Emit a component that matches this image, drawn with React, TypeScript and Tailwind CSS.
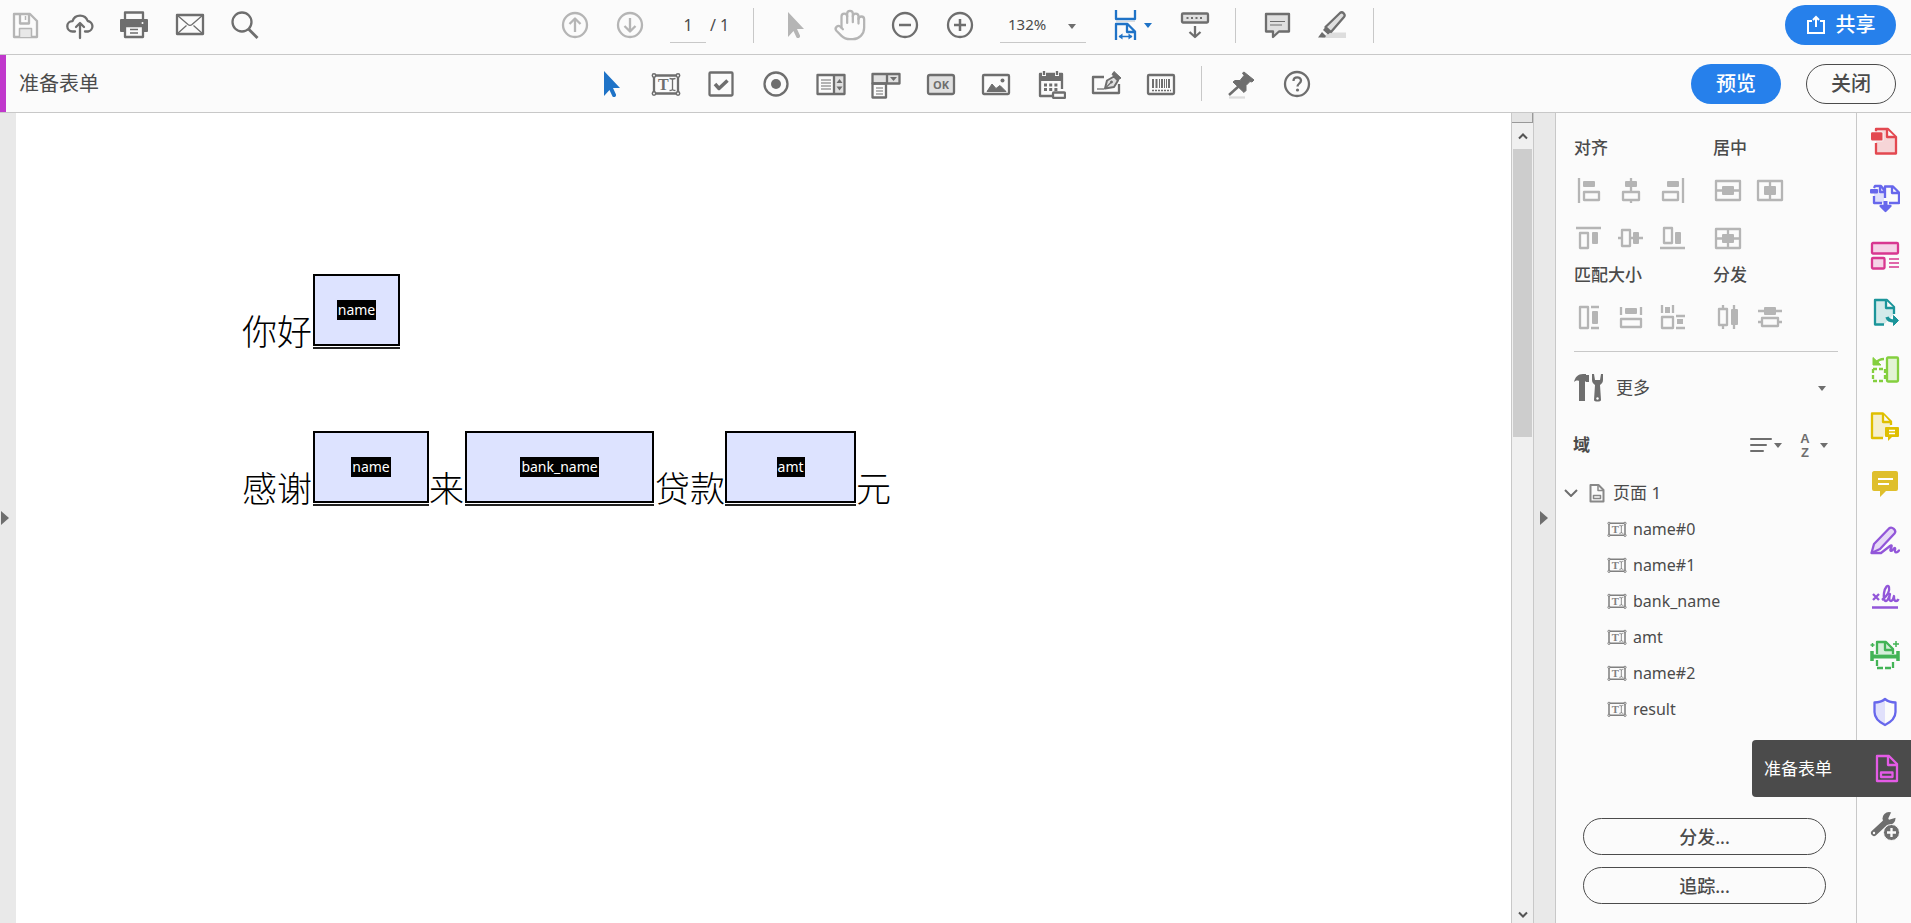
import type { ReactNode } from "react";
import { Hand } from "lucide-react";
import clsx from "clsx";

type IconProps = {
    children: ReactNode;
    className?: string;
    box?: number;
};

function Icon({ children, className, box = 30 }: IconProps) {
    return (
        <svg
            viewBox={`0 0 ${box} ${box}`}
            className={clsx("shrink-0", className ?? "size-[30px]")}
            fill="none"
            stroke="currentColor"
            strokeWidth={2.3}
            strokeLinejoin="round"
            aria-hidden="true"
        >
            {children}
        </svg>
    );
}

function Caret({ className }: { className?: string }) {
    return (
        <svg viewBox="0 0 8 5" className={clsx("w-2 h-[5px] shrink-0", className)} fill="currentColor" aria-hidden="true">
            <path d="M0 0h8L4 5z" />
        </svg>
    );
}

function IconButton({ label, children, className }: { label: string; children: ReactNode; className?: string }) {
    return (
        <button type="button" aria-label={label} className={clsx("flex shrink-0 items-center", className)}>
            {children}
        </button>
    );
}

function Divider() {
    return <div className="h-[35px] w-px shrink-0 bg-[#c8c8c8]" />;
}

const pointer = <path d="M8 2v25l5.500-6 3 6.500c2 1.500 4 0 3.500-2l-3-6.500h7z" fill="currentColor" stroke="none" />;

const textField = (
    <>
        <path d="M4 6.500h22M4 24.500h22M3 8v15M27 8v15" />
        <g strokeWidth="1.500">
            <circle cx="3" cy="6.500" r="1.700" />
            <circle cx="27" cy="6.500" r="1.700" />
            <circle cx="3" cy="24.500" r="1.700" />
            <circle cx="27" cy="24.500" r="1.700" />
            <path d="M21.500 10v11M18.500 9.500c2 0 3 .5 3 1.500 0-1 1-1.500 3-1.500M18.500 21.500c2 0 3-.5 3-1.500 0 1 1 1.500 3 1.500" strokeWidth="1.300" />
        </g>
        <text x="7" y="21" fontFamily="Liberation Serif, serif" fontSize="16" fontWeight="700" fill="currentColor" stroke="none">T</text>
    </>
);

const fileTools = [
    {
        label: "保存",
        dim: true,
        icon: (
            <>
                <path d="M4 4h16l7 7v16H4z" />
                <path d="M10 4v9.500h9V4" />
                <path d="M15.500 6v4" strokeWidth="1.500" />
                <path d="M9.500 27v-8.500h12V27" fill="#e8e8e8" strokeWidth="1.500" />
            </>
        ),
    },
    {
        label: "上传",
        icon: (
            <g strokeLinecap="round">
                <path d="M10 21.500H7.500a5.200 5.200 0 0 1 0-10.400A8 8 0 0 1 22.700 11a5.300 5.300 0 0 1 .3 10.500h-3" />
                <path d="M15 28V13.500M11 17l4-4 4 4" />
            </g>
        ),
    },
    {
        label: "打印",
        icon: (
            <>
                <path d="M5 11V2.500h18V11" />
                <path d="M1 9h26a1 1 0 0 1 1 1v11a1 1 0 0 1-1 1H1a1 1 0 0 1-1-1V10a1 1 0 0 1 1-1z" fill="currentColor" stroke="none" />
                <path d="M5 16h18v11H5z" fill="#fafafa" />
                <path d="M10 19.500h8M10 23h8" strokeWidth="1.300" />
                <circle cx="22.500" cy="13" r="1" fill="#fff" stroke="none" />
            </>
        ),
    },
    {
        label: "电子邮件",
        icon: (
            <>
                <path d="M2 5h26v19H2z" />
                <path d="M2 5l11 9.500c1.500 1.200 2.500 1.200 4 0L28 5M2 24l9.500-8.500M28 24l-9.500-8.500" strokeWidth="1.300" />
            </>
        ),
    },
    {
        label: "查找",
        icon: (
            <>
                <circle cx="12" cy="12" r="9.500" />
                <path d="M18.500 19l9 9" strokeWidth="2.800" />
            </>
        ),
    },
];

const formTools = [
    { label: "文本域", icon: textField },
    {
        label: "复选框",
        icon: (
            <>
                <rect x="3.500" y="3.500" width="23" height="23" rx="1" />
                <path d="M9 15l4 4.500 8.500-8" strokeWidth="3.500" />
            </>
        ),
    },
    {
        label: "单选钮",
        icon: (
            <>
                <circle cx="15" cy="15" r="11.500" />
                <circle cx="15" cy="15" r="5" fill="currentColor" stroke="none" />
            </>
        ),
    },
    {
        label: "列表框",
        icon: (
            <>
                <path d="M18 6h10v19H18z" fill="#e0e0e0" stroke="none" />
                <path d="M1.500 6h27v19h-27zM18 6v19" />
                <path d="M5 11h10M5 14h10M5 17h10M5 20h10" strokeWidth="1.200" />
                <path d="M20.500 14l3-4 3 4zM20.500 17.500l3 4 3-4z" fill="currentColor" stroke="none" />
            </>
        ),
    },
    {
        label: "下拉列表",
        icon: (
            <>
                <path d="M1.500 5h27v9.500h-27z" fill="#e0e0e0" />
                <path d="M16 5v9.500M1.500 14.500H15v14H1.500z" />
                <path d="M5 19h7M5 22h7M5 25h7" strokeWidth="1.200" />
                <path d="M19 8h7l-3.500 4z" fill="currentColor" stroke="none" />
            </>
        ),
    },
    {
        label: "按钮",
        icon: (
            <>
                <rect x="2" y="6" width="26" height="19" rx="2" fill="#e0e0e0" />
                <text x="7" y="20" fontFamily="Open Sans, sans-serif" fontSize="11" fontWeight="700" fill="currentColor" stroke="none">OK</text>
            </>
        ),
    },
    {
        label: "图像域",
        icon: (
            <>
                <rect x="2" y="6" width="26" height="19" rx="1" />
                <path d="M6 22.500l5-7.500 4 4.500 4-3 6 6z" fill="currentColor" strokeWidth="1" />
                <circle cx="21.500" cy="11.500" r="2" fill="currentColor" stroke="none" />
            </>
        ),
    },
    {
        label: "日期域",
        icon: (
            <>
                <path d="M16 27H4V5h22v15" />
                <path d="M3 5h24v7H3z" fill="currentColor" stroke="none" />
                <path d="M8 2v5M21 2v5" stroke="#fafafa" strokeWidth="4" />
                <path d="M8 2v4M21 2v4" />
                <path d="M8 16h14M8 20.500h14" strokeWidth="3" strokeDasharray="3 2.200" />
                <rect x="17" y="23.500" width="12" height="5.500" rx="1" fill="#fafafa" />
            </>
        ),
    },
    {
        label: "数字签名",
        icon: (
            <>
                <path d="M13 8H2v16h26v-9" />
                <path d="M6 20h7" strokeWidth="1.300" />
                <path d="M14 19.500l2-8 7-4 4 4-4 6.500z" fill="#e0e0e0" strokeWidth="2" />
                <path d="M23 2.500l7 6.500-3 2-6-5.500z" fill="currentColor" strokeWidth="1" />
                <path d="M14 19.500l6.500-6.500" strokeWidth="1.300" />
                <circle cx="20.500" cy="13" r="1" fill="currentColor" strokeWidth="1" />
            </>
        ),
    },
    {
        label: "条形码",
        icon: (
            <>
                <rect x="2" y="6" width="26" height="19" rx="1" />
                <path d="M7 10v9M10.500 10v9M16 10v9M23 10v9" strokeWidth="2" />
                <path d="M13.500 10v9M18.500 10v9M20.500 10v9" strokeWidth="1" />
                <path d="M6 21.500h19" strokeWidth="1.500" strokeDasharray="2 1" />
            </>
        ),
    },
];

const alignTools = [
    {
        label: "左对齐",
        icon: (
            <>
                <path d="M4 2v25M9 16h15v8H9z" />
                <rect x="8" y="5" width="12" height="6" rx="1" fill="currentColor" stroke="none" />
            </>
        ),
    },
    {
        label: "水平居中对齐",
        icon: (
            <>
                <path d="M14 2v13M14 24v3M6 16h16v8H6z" />
                <rect x="8" y="5" width="12" height="6" rx="1" fill="currentColor" stroke="none" />
            </>
        ),
    },
    {
        label: "右对齐",
        icon: (
            <>
                <path d="M24 2v25M4 16h15v8H4z" />
                <rect x="8" y="5" width="12" height="6" rx="1" fill="currentColor" stroke="none" />
            </>
        ),
    },
    {
        label: "顶端对齐",
        icon: (
            <>
                <path d="M1 4h25M5 9h8v15H5z" />
                <rect x="17" y="8" width="6" height="12" rx="1" fill="currentColor" stroke="none" />
            </>
        ),
    },
    {
        label: "垂直居中对齐",
        icon: (
            <>
                <path d="M1 14h4M13 14h13M5 6h8v16H5z" />
                <rect x="16" y="8" width="6" height="12" rx="1" fill="currentColor" stroke="none" />
            </>
        ),
    },
    {
        label: "底端对齐",
        icon: (
            <>
                <path d="M1 24h25M5 4h8v15H5z" />
                <rect x="16" y="8" width="6" height="12" rx="1" fill="currentColor" stroke="none" />
            </>
        ),
    },
];

const centerTools = [
    { label: "垂直居中", lines: "M2 14.500h24" },
    { label: "水平居中", lines: "M14 5v19" },
    { label: "全部居中", lines: "M2 14.500h24M14 5v19" },
].map((tool) => ({
    label: tool.label,
    icon: (
        <>
            <path d={`M2 5h24v19H2z${tool.lines}`} />
            <rect x="8" y="10" width="12" height="9" rx="1" fill="currentColor" stroke="none" />
        </>
    ),
}));

const sizeTools = [
    {
        label: "匹配高度",
        icon: (
            <>
                <path d="M5 4h8v21H5zM16 4h8M16 25h8" />
                <rect x="17" y="8" width="6" height="13" rx="1" fill="currentColor" stroke="none" />
            </>
        ),
    },
    {
        label: "匹配宽度",
        icon: (
            <>
                <path d="M4 16h20v8H4zM4 4v8M24 4v8" />
                <rect x="8" y="5" width="12" height="6" rx="1" fill="currentColor" stroke="none" />
            </>
        ),
    },
    {
        label: "匹配两者",
        icon: (
            <>
                <path d="M3 14h11v11H3zM3 2v8M14 2v8M17 13h9M17 25h9" />
                <rect x="6" y="4" width="5" height="6" fill="currentColor" stroke="none" />
                <rect x="18" y="16" width="6" height="5" fill="currentColor" stroke="none" />
            </>
        ),
    },
];

const distributeTools = [
    {
        label: "水平分发",
        icon: (
            <>
                <path d="M5 6h8v16H5zM9 2v4M9 22v4M20 2v24" />
                <rect x="17" y="6" width="7" height="16" rx="1" fill="currentColor" stroke="none" />
            </>
        ),
    },
    {
        label: "垂直分发",
        icon: (
            <>
                <path d="M2 8h24M6 15h16v8H6zM2 19h4M22 19h4" />
                <rect x="8" y="4" width="12" height="8" rx="1" fill="currentColor" stroke="none" />
            </>
        ),
    },
];

const railTools = [
    {
        label: "创建 PDF",
        color: "text-[#e34850]",
        icon: (
            <>
                <path d="M6 14V2h12l8 8v16H6z" fill="#f6d5d7" stroke="none" />
                <path d="M6 4.500V2h12l8 8v16.500H6V16" />
                <path d="M17 2.500V10h8" fill="#fafafa" />
                <rect x="1" y="5" width="12" height="9" rx="1" fill="currentColor" stroke="#fafafa" strokeWidth="1" />
                <rect x="1" y="5.500" width="11" height="7.500" rx="1" fill="currentColor" stroke="none" />
            </>
        ),
    },
    {
        label: "合并文件",
        color: "text-[#6767ec]",
        icon: (
            <>
                <path d="M4 5h10v14H4z" fill="#e0e0fb" stroke="none" />
                <path d="M4 12v7h8M4 4l1-2h6l4 5V2.500h8l6 6V19H19M15 7v7M10 3v5h5M22 3v6h6" />
                <rect x="0" y="5" width="8" height="4.500" rx="1" fill="currentColor" stroke="none" />
                <path d="M15.500 17v6" strokeWidth="4" />
                <path d="M10.500 22h10l-5 5z" fill="currentColor" />
            </>
        ),
    },
    {
        label: "组织页面",
        color: "text-[#d83790]",
        icon: (
            <>
                <rect x="2" y="2" width="26" height="10.500" rx="1" fill="#f5d3e7" />
                <rect x="2" y="17" width="12.500" height="10.500" rx="1" fill="#f5d3e7" />
                <path d="M19 18h10M19 22h10M19 26h10" strokeWidth="1.300" />
            </>
        ),
    },
    {
        label: "导出 PDF",
        color: "text-[#1b959a]",
        icon: (
            <>
                <path d="M14 26.500H5V2h12l7 7v7" fill="#d3eaea" />
                <path d="M16 2.500V10h8" fill="#fafafa" />
                <path d="M17 19c1 3 3 4 7 4" strokeWidth="3.500" />
                <path d="M23.500 17.500l5 5-5 5z" fill="currentColor" strokeWidth="1" />
            </>
        ),
    },
    {
        label: "比较文件",
        color: "text-[#84cf3f]",
        icon: (
            <>
                <rect x="17" y="2.500" width="11" height="24" rx="1" fill="#e3f3d4" />
                <path d="M3 14h11M3 26h11M3 14v12M15 14v12" strokeDasharray="4 2" />
                <path d="M14 4c-4 0-6 1-8 4" strokeWidth="2.500" />
                <path d="M3 2.500v7.500h8z" fill="currentColor" strokeWidth="1" />
            </>
        ),
    },
    {
        label: "发送以供注释",
        color: "text-[#dfbf00]",
        icon: (
            <>
                <path d="M13 26H2V1.500h11l8 8V13" fill="#f5efcc" />
                <path d="M13 2v8h7" fill="#fafafa" />
                <path d="M16 15h12a1 1 0 0 1 1 1v8a1 1 0 0 1-1 1h-6l-4 4v-4h-2a1 1 0 0 1-1-1v-8a1 1 0 0 1 1-1z" fill="currentColor" stroke="none" />
                <path d="M19 18.500h6M19 21.500h6" stroke="#fff" strokeWidth="1.300" />
            </>
        ),
    },
    {
        label: "注释",
        color: "text-[#dfbf2c]",
        icon: (
            <>
                <path d="M4 2h22a2 2 0 0 1 2 2v16a2 2 0 0 1-2 2H16l-6 6v-6H4a2 2 0 0 1-2-2V4c0-1 1-2 2-2z" fill="currentColor" stroke="none" />
                <path d="M8 10h15M8 15h11" stroke="#fff" strokeWidth="2" />
            </>
        ),
    },
    {
        label: "填写和签名",
        color: "text-[#9256d9]",
        icon: (
            <g strokeLinecap="round">
                <path d="M1.500 27l2.500-9L19 2.500c3-2.500 8 2 5.500 5L10 23z" fill="#e6d9f6" />
                <path d="M2 27h9l9-7c2-1.500 2 0 1 2-1.500 3 0 4 2 1.500 2-2.500 2.500-1.500 2 .5-.5 3 2 3 4 .5" />
            </g>
        ),
    },
    {
        label: "请求签名",
        color: "text-[#9256d9]",
        icon: (
            <>
                <path d="M2 24.500h26M3 11l6 6M9 11l-6 6" />
                <path d="M12 17c5-4 8-9 7-13-1-3-4 0-5 6-.7 5 0 8 2 8s3-4 4-7c-1 4-1 7 1 7s2.500-3 3-5c0 3 0 5 2 5s2-1 2.500-2" />
            </>
        ),
    },
    {
        label: "扫描和 OCR",
        color: "text-[#43b456]",
        icon: (
            <>
                <path d="M7 14V2h9l7 7v5" fill="#d6eeda" />
                <path d="M15 2v8h7" />
                <path d="M2 11v10M28 11v10" strokeWidth="3.500" />
                <path d="M2 16.500h26" strokeWidth="4" />
                <path d="M7 20v8h16v-8" strokeDasharray="6 2" />
                <path d="M26 1v6M23 4h6M2.500 3v4M.5 5h4" strokeWidth="1.500" />
            </>
        ),
    },
    {
        label: "保护",
        color: "text-[#6767ec]",
        icon: (
            <>
                <path d="M15 2c-3 2.500-6 3.500-10.500 3.500V15c0 6 4.500 10 10.500 13z" fill="#e0e0fb" stroke="none" />
                <path d="M15 2c-3 2.500-6 3.500-10.500 3.500V15c0 6 4.500 10 10.500 13 6-3 10.500-7 10.500-13V5.500C21 5.500 18 4.500 15 2z" />
            </>
        ),
    },
    {
        label: "准备表单",
        color: "text-[#e45be6]",
        active: true,
        icon: (
            <>
                <path d="M7 2h12l8 8v17H7z" />
                <path d="M18 2v9h8" />
                <rect x="11" y="18.500" width="11.500" height="4.500" />
            </>
        ),
    },
    {
        label: "更多工具",
        color: "text-[#6e6e6e]",
        icon: (
            <>
                <path d="M4 22L17 10" strokeWidth="6" strokeLinecap="round" />
                <circle cx="19" cy="7.500" r="6.500" fill="currentColor" stroke="none" />
                <path d="M19.500 7.500L23 0l5 5z" fill="#fafafa" stroke="#fafafa" />
                <circle cx="4" cy="22" r="1.200" fill="#fafafa" stroke="none" />
                <circle cx="21.500" cy="21.500" r="8" fill="currentColor" stroke="#fafafa" strokeWidth="1" />
                <path d="M21.500 17v9M17 21.500h9" stroke="#fafafa" />
            </>
        ),
    },
];

const fields = ["name#0", "name#1", "bank_name", "amt", "name#2", "result"];

function ToolGroup({ title, tools }: { title: string; tools: { label: string; icon: ReactNode }[] }) {
    return (
        <section>
            <h3 className="text-[17px] leading-6 font-medium">{title}</h3>
            <div className="mt-4 ml-px flex flex-wrap gap-x-3.5 gap-y-5 text-[#b5b5b5]">
                {tools.map((tool) => (
                    <IconButton key={tool.label} label={tool.label}>
                        <Icon box={28} className="size-7">{tool.icon}</Icon>
                    </IconButton>
                ))}
            </div>
        </section>
    );
}

function FormField({ name, className }: { name: string; className: string }) {
    return (
        <span className="border-b-2 border-[#222] pb-px">
            <button
                type="button"
                className={clsx("flex h-[72px] items-center justify-center border-2 border-black bg-[#dde3ff] font-normal", className)}
            >
                <span className="bg-black px-px text-sm leading-5 text-white">{name}</span>
            </button>
        </span>
    );
}

function TopBar() {
    return (
        <header className="flex h-[55px] shrink-0 items-center border-b border-[#c8c8c8] pb-1 text-[#6e6e6e]">
            <div className="flex flex-1 gap-[25px] pl-2.5">
                {fileTools.map((tool) => (
                    <IconButton key={tool.label} label={tool.label} className={tool.dim ? "text-[#b5b5b5]" : ""}>
                        <Icon>{tool.icon}</Icon>
                    </IconButton>
                ))}
            </div>

            <div className="flex shrink-0 items-center pl-7">
                <div className="flex gap-[25px] text-[#b5b5b5]">
                    <IconButton label="上一页">
                        <Icon>
                            <circle cx="15" cy="15" r="12" />
                            <path d="M15 22V9M9.500 14L15 8.500l5.500 5.500" />
                        </Icon>
                    </IconButton>
                    <IconButton label="下一页">
                        <Icon>
                            <circle cx="15" cy="15" r="12" />
                            <path d="M15 8v13M9.500 16l5.500 5.500 5.500-5.500" />
                        </Icon>
                    </IconButton>
                </div>
                <input
                    aria-label="页码"
                    defaultValue="1"
                    className="ml-[25px] h-[35px] w-9 border-b border-[#c8c8c8] text-center text-base text-[#4b4b4b] outline-none"
                />
                <span className="ml-1 w-[43px] text-base text-[#4b4b4b]">/ 1</span>
                <Divider />
                <div className="ml-[26px] flex gap-[25px]">
                    <IconButton label="选择" className="text-[#b5b5b5]">
                        <Icon>{pointer}</Icon>
                    </IconButton>
                    <IconButton label="手形工具" className="size-[30px] justify-center text-[#b5b5b5]">
                        <Hand size={34} strokeWidth={1.6} className="shrink-0" />
                    </IconButton>
                    <IconButton label="缩小">
                        <Icon>
                            <circle cx="15" cy="15" r="12" />
                            <path d="M9 15h12" strokeWidth="2.500" />
                        </Icon>
                    </IconButton>
                    <IconButton label="放大">
                        <Icon>
                            <circle cx="15" cy="15" r="12" />
                            <path d="M9 15h12M15 9v12" strokeWidth="2.500" />
                        </Icon>
                    </IconButton>
                </div>
                <div className="relative ml-[25px]">
                    <select aria-label="缩放" className="h-[35px] w-[86px] appearance-none border-b border-[#c8c8c8] pl-2 text-[15px] text-[#4b4b4b] outline-none">
                        <option>132%</option>
                    </select>
                    <Caret className="pointer-events-none absolute top-4 right-2.5" />
                </div>
                <IconButton label="适合宽度" className="ml-6 gap-1 text-[#1f73c7]">
                    <Icon>
                        <path d="M6 0v9h19V0" />
                        <path d="M6 11.500h19" stroke="#ddd" strokeWidth="1" />
                        <path d="M6 30V14h11.500l7.500 7.500V30M17 14v8h8" />
                        <path d="M9 26.500h13" strokeWidth="1.500" />
                        <path d="M12.500 23.500v6l-4-3zM18.500 23.500v6l4-3z" fill="currentColor" stroke="none" />
                    </Icon>
                    <Caret />
                </IconButton>
                <IconButton label="工具栏" className="ml-7">
                    <Icon>
                        <rect x="2" y="3.500" width="26" height="9" rx="1" fill="#e0e0e0" />
                        <path d="M6.500 8h18" strokeWidth="2" strokeDasharray="2 2.500" />
                        <path d="M15 16v11M9.500 22l5.500 5 5.500-5" />
                    </Icon>
                </IconButton>
                <span className="w-[25px]" />
                <Divider />
                <div className="mx-[26px] flex gap-[25px]">
                    <IconButton label="添加附注">
                        <Icon>
                            <path d="M4 4h23v17.500H17L11 27v-5.500H4z" fill="#e0e0e0" />
                            <path d="M8 11.500h15M8 15h12" strokeWidth="1.200" />
                        </Icon>
                    </IconButton>
                    <IconButton label="高亮文本">
                        <Icon>
                            <path d="M4 28l8-5.500h17V28z" fill="#ddd" stroke="none" />
                            <path d="M8.500 17L23 3c2.500-2 6 1.500 4 4L14 22z" fill="#e0e0e0" />
                            <path d="M8.500 17l5.500 5-3 2.500L6 20zM5 22l4 4-1 1.500H1z" fill="currentColor" stroke="none" />
                        </Icon>
                    </IconButton>
                </div>
                <Divider />
            </div>

            <div className="flex flex-1 justify-end pr-[15px]">
                <button type="button" className="flex h-10 w-[111px] items-center justify-center gap-2.5 rounded-full bg-[#2680eb] text-xl font-medium text-white">
                    <svg viewBox="0 0 20 20" className="size-5" fill="none" stroke="currentColor" strokeWidth={2} aria-hidden="true">
                        <path d="M6 6H2v12h16V6h-4M10 12V2M7 5l3-3 3 3" />
                    </svg>
                    共享
                </button>
            </div>
        </header>
    );
}

function FormBar() {
    return (
        <div className="flex h-[58px] shrink-0 items-center border-b border-[#c8c8c8]">
            <div className="flex flex-1 items-center gap-[13px] self-stretch">
                <div className="w-1.5 self-stretch bg-[#c038cc]" />
                <h1 className="text-xl">准备表单</h1>
            </div>

            <div className="flex shrink-0 items-center gap-[25px] pl-3 text-[#6e6e6e]">
                <IconButton label="选择对象" className="text-[#1f73c7]">
                    <Icon>{pointer}</Icon>
                </IconButton>
                {formTools.map((tool) => (
                    <IconButton key={tool.label} label={tool.label}>
                        <Icon>{tool.icon}</Icon>
                    </IconButton>
                ))}
                <Divider />
                <IconButton label="保持工具选定">
                    <Icon>
                        <path d="M2 28.500h16" stroke="#ddd" />
                        <path d="M2 26l10-9" strokeWidth="2.500" />
                        <path d="M17 3l10 8-2 2-2-.5-4 4v5l-2 2L6 13l2-1.500h5l4-5L15.500 4z" fill="currentColor" strokeWidth="1" />
                    </Icon>
                </IconButton>
                <IconButton label="帮助">
                    <Icon>
                        <circle cx="15" cy="15" r="12" />
                        <path d="M11.500 12c0-5 7.500-4.500 7.500-.5 0 3-3.500 3-3.500 6" />
                        <circle cx="15.500" cy="21" r="1.600" fill="currentColor" stroke="none" />
                    </Icon>
                </IconButton>
            </div>

            <div className="flex flex-1 justify-end gap-[25px] pr-[15px] text-xl font-medium">
                <button type="button" className="h-10 w-[90px] rounded-full bg-[#2680eb] text-white">预览</button>
                <button type="button" className="h-10 w-[90px] rounded-full border border-[#4b4b4b]">关闭</button>
            </div>
        </div>
    );
}

function DocumentView() {
    return (
        <main className="min-w-0 flex-1 bg-white pt-[161px] pl-[226px] text-black">
            <p className="flex items-end text-[35px] leading-[35px] font-light">
                <span className="mr-px">你好</span>
                <FormField name="name" className="w-[87px]" />
            </p>
            <p className="mt-[82px] flex items-end text-[35px] leading-[35px] font-light">
                <span className="mr-px">感谢</span>
                <FormField name="name" className="w-[116px]" />
                <span className="mr-px">来</span>
                <FormField name="bank_name" className="w-[189px]" />
                <span className="ml-px">贷款</span>
                <FormField name="amt" className="w-[131px]" />
                <span>元</span>
            </p>
        </main>
    );
}

function Scrollbar() {
    return (
        <div className="flex w-[23px] shrink-0 flex-col items-center border-x border-[#c8c8c8] bg-[#f0f0f0]">
            <div className="h-2.5 w-full border-r border-b border-[#999] bg-[#e4e4e4]" />
            <div className="flex h-[26px] items-center">
                <svg viewBox="0 0 10 8" className="h-2 w-2.5" fill="none" stroke="#555" strokeWidth={2} aria-hidden="true">
                    <path d="M1 6.500l4-4 4 4" />
                </svg>
            </div>
            <div className="flex w-[19px] flex-1 flex-col">
                <div className="h-[38%] bg-[#cdcdcd]" />
            </div>
            <div className="flex h-4 items-center">
                <svg viewBox="0 0 10 8" className="h-2 w-2.5" fill="none" stroke="#555" strokeWidth={2} aria-hidden="true">
                    <path d="M1 1.500l4 4 4-4" />
                </svg>
            </div>
        </div>
    );
}

function SidePanel() {
    return (
        <aside className="flex w-[301px] shrink-0 flex-col border-l border-[#c8c8c8] pb-[19px]">
            <div className="mx-[18px] grid grid-cols-[139px_1fr] border-b border-[#c8c8c8] pt-[23px] pb-5">
                <div className="w-[113px] space-y-[11px]">
                    <ToolGroup title="对齐" tools={alignTools} />
                    <ToolGroup title="匹配大小" tools={sizeTools} />
                </div>
                <div className="w-[74px] space-y-[11px]">
                    <ToolGroup title="居中" tools={centerTools} />
                    <ToolGroup title="分发" tools={distributeTools} />
                </div>
            </div>

            <button type="button" aria-haspopup="menu" className="mt-[21px] mr-[30px] ml-[18px] flex items-center text-[17px] leading-6">
                <Icon className="size-[30px] text-[#6e6e6e]">
                    <path d="M0 9c1-5 4-8 9-8h3v1h3v7h-3l-1-1v20H5V8C3 7 1 8 0 9z" fill="currentColor" stroke="none" />
                    <path d="M18 1v6c0 3 2 4 3 5l-1 15c0 2 7 2 7 0l-1-15c1-1 3-2 3-5V1h-2l-1 6h-5l-1-6z" fill="currentColor" stroke="none" />
                    <circle cx="23.500" cy="25.500" r="1.200" fill="#fff" stroke="none" />
                </Icon>
                <span className="ml-3 flex-1 text-left">更多</span>
                <Caret className="text-[#6e6e6e]" />
            </button>

            <div className="mt-[27px] mr-7 ml-[17px] flex h-[30px] items-center text-[#6e6e6e]">
                <h3 className="flex-1 text-[17px] leading-6 font-bold text-[#4b4b4b]">域</h3>
                <IconButton label="视图" className="gap-0.5">
                    <svg viewBox="0 0 22 16" className="h-4 w-[22px]" stroke="currentColor" strokeWidth={2} strokeLinecap="round" aria-hidden="true">
                        <path d="M1 2h20M1 8h15M1 14h12" />
                    </svg>
                    <Caret />
                </IconButton>
                <IconButton label="排序" className="ml-4 gap-2">
                    <svg viewBox="0 0 14 30" className="h-[30px] w-3.5" fill="currentColor" aria-hidden="true">
                        <text x="7" y="13" textAnchor="middle" fontFamily="Liberation Sans, sans-serif" fontSize="13" fontWeight="700">A</text>
                        <text x="7" y="27" textAnchor="middle" fontFamily="Liberation Sans, sans-serif" fontSize="13" fontWeight="700">Z</text>
                    </svg>
                    <Caret />
                </IconButton>
            </div>

            <div className="mt-[15px]">
                <button type="button" aria-expanded="true" className="ml-2 flex h-9 items-center text-[17px]">
                    <svg viewBox="0 0 14 8" className="h-2 w-3.5 text-[#6e6e6e]" fill="none" stroke="currentColor" strokeWidth={2} aria-hidden="true">
                        <path d="M1 1l6 6 6-6" />
                    </svg>
                    <svg viewBox="0 0 16 20" className="mr-2 ml-[11px] h-5 w-4 text-[#888]" fill="none" stroke="currentColor" strokeWidth={2} strokeLinejoin="round" aria-hidden="true">
                        <path d="M1.500 2h8l5 5v11.500h-13z" />
                        <path d="M9 2.500V7.500h5M4.500 12.500h7v3h-7z" strokeWidth="1.500" />
                    </svg>
                    页面 1
                </button>
                <ul>
                    {fields.map((name) => (
                        <li key={name} className="flex h-9 items-center gap-1.5 pl-[51px] text-base">
                            <Icon className="size-5 text-[#808080]">{textField}</Icon>
                            {name}
                        </li>
                    ))}
                </ul>
            </div>

            <div className="mt-auto mr-[30px] ml-[27px] flex flex-col gap-3 text-lg leading-6 font-medium">
                <button type="button" className="h-[37px] rounded-full border border-[#4b4b4b]">分发...</button>
                <button type="button" className="h-[37px] rounded-full border border-[#4b4b4b]">追踪...</button>
            </div>
        </aside>
    );
}

function ToolRail() {
    return (
        <nav className="w-[55px] shrink-0 border-l border-[#c8c8c8]">
            {railTools.map((tool) => (
                <div key={tool.label} className={clsx("relative flex h-[57px] items-center", tool.color, tool.active ? "z-10 -ml-px bg-[#4b4b4b] pl-3.5" : "pl-[13px]")}>
                    {tool.active && (
                        <span className="absolute top-0 right-full flex h-full w-[104px] items-center rounded-l bg-[#4b4b4b] pl-3 text-[17px] whitespace-nowrap text-white">
                            {tool.label}
                        </span>
                    )}
                    <IconButton label={tool.label}>
                        <Icon>{tool.icon}</Icon>
                    </IconButton>
                </div>
            ))}
        </nav>
    );
}

export default function App() {
    return (
        <div className="flex h-screen flex-col overflow-hidden bg-[#fbfbfb] font-['Noto_Sans','Noto_Sans_CJK_SC',sans-serif] text-[#4b4b4b]">
            <TopBar />
            <FormBar />
            <div className="flex min-h-0 flex-1">
                <button type="button" aria-label="展开导览窗格" className="flex w-4 shrink-0 items-center bg-[#e9e9e9] pl-px text-[#6e6e6e]">
                    <svg viewBox="0 0 8 14" className="h-3.5 w-2" fill="currentColor" aria-hidden="true">
                        <path d="M0 0l8 7-8 7z" />
                    </svg>
                </button>
                <DocumentView />
                <Scrollbar />
                <button type="button" aria-label="折叠工具窗格" className="flex w-[21px] shrink-0 items-center bg-[#e9e9e9] pl-1.5 text-[#6e6e6e]">
                    <svg viewBox="0 0 8 14" className="h-3.5 w-2" fill="currentColor" aria-hidden="true">
                        <path d="M0 0l8 7-8 7z" />
                    </svg>
                </button>
                <SidePanel />
                <ToolRail />
            </div>
        </div>
    );
}
